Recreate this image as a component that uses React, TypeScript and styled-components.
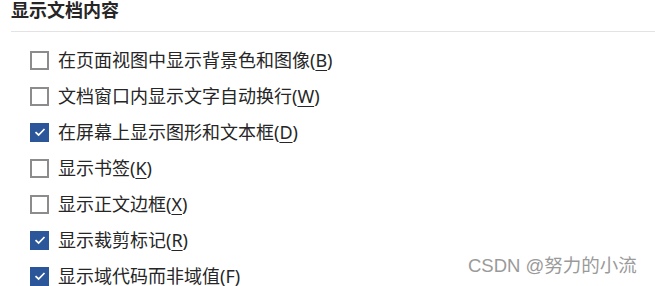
import React from 'react'
import styled, { createGlobalStyle } from 'styled-components'

const GlobalStyle = createGlobalStyle`
  html, body {
    margin: 0;
    padding: 0;
    background: #ffffff;
  }
  body {
    font-family: "Noto Sans", "Noto Sans CJK SC", sans-serif;
  }
`

const Options = [
  { label: '在页面视图中显示背景色和图像', key: 'B', checked: false },
  { label: '文档窗口内显示文字自动换行', key: 'W', checked: false },
  { label: '在屏幕上显示图形和文本框', key: 'D', checked: true },
  { label: '显示书签', key: 'K', checked: false },
  { label: '显示正文边框', key: 'X', checked: false },
  { label: '显示裁剪标记', key: 'R', checked: true },
  { label: '显示域代码而非域值', key: 'F', checked: true },
]

const App = () => {
  return (
    <Page>
      <GlobalStyle />
      <Title>显示文档内容</Title>
      <Divider />
      <List>
        {Options.map((item) => (
          <Row key={item.key}>
            <Box checked={item.checked}>
              {item.checked && (
                <svg width="12" height="10" viewBox="0 0 12 10">
                  <path d="M1.5 5.2 L4.6 8 L10.5 2" fill="none" stroke="#ffffff" strokeWidth="1.7" />
                </svg>
              )}
            </Box>
            <Label>
              {item.label}(<u>{item.key}</u>)
            </Label>
          </Row>
        ))}
      </List>
      <Watermark>CSDN @努力的小流</Watermark>
    </Page>
  )
}

export default App

const Page = styled.div`
  position: relative;
  width: 655px;
  height: 286px;
  overflow: hidden;
  background: #ffffff;
`
const Title = styled.div`
  margin: -1px 0 0 11px;
  font-size: 18px;
  line-height: 22px;
  font-weight: 700;
  color: #262626;
`
const Divider = styled.div`
  margin: 10px 0 0 11px;
  height: 1px;
  background: #e3e3e3;
`
const List = styled.div`
  display: flex;
  flex-direction: column;
  gap: 12px;
  padding: 16px 0 0 30px;
`
const Row = styled.div`
  display: flex;
  align-items: center;
  height: 24px;
  gap: 9px;
`
const Box = styled.div<{ checked: boolean }>`
  box-sizing: border-box;
  width: 19px;
  height: 19px;
  display: flex;
  align-items: center;
  justify-content: center;
  background: ${(props) => (props.checked ? '#2b579a' : '#ffffff')};
  border: ${(props) => (props.checked ? '1px solid #2b579a' : '2px solid #8c8c8c')};
`
const Label = styled.div`
  font-size: 18px;
  line-height: 24px;
  color: #262626;
  white-space: nowrap;

  u {
    text-decoration-thickness: 1px;
    text-underline-offset: 3px;
  }
`
const Watermark = styled.div`
  position: absolute;
  left: 468px;
  top: 255px;
  font-size: 18.5px;
  line-height: 22px;
  color: #9a9a9a;
  font-family: "Liberation Sans", "Noto Sans CJK SC", sans-serif;
  text-shadow: 0 0 1px #ffffff;
`
